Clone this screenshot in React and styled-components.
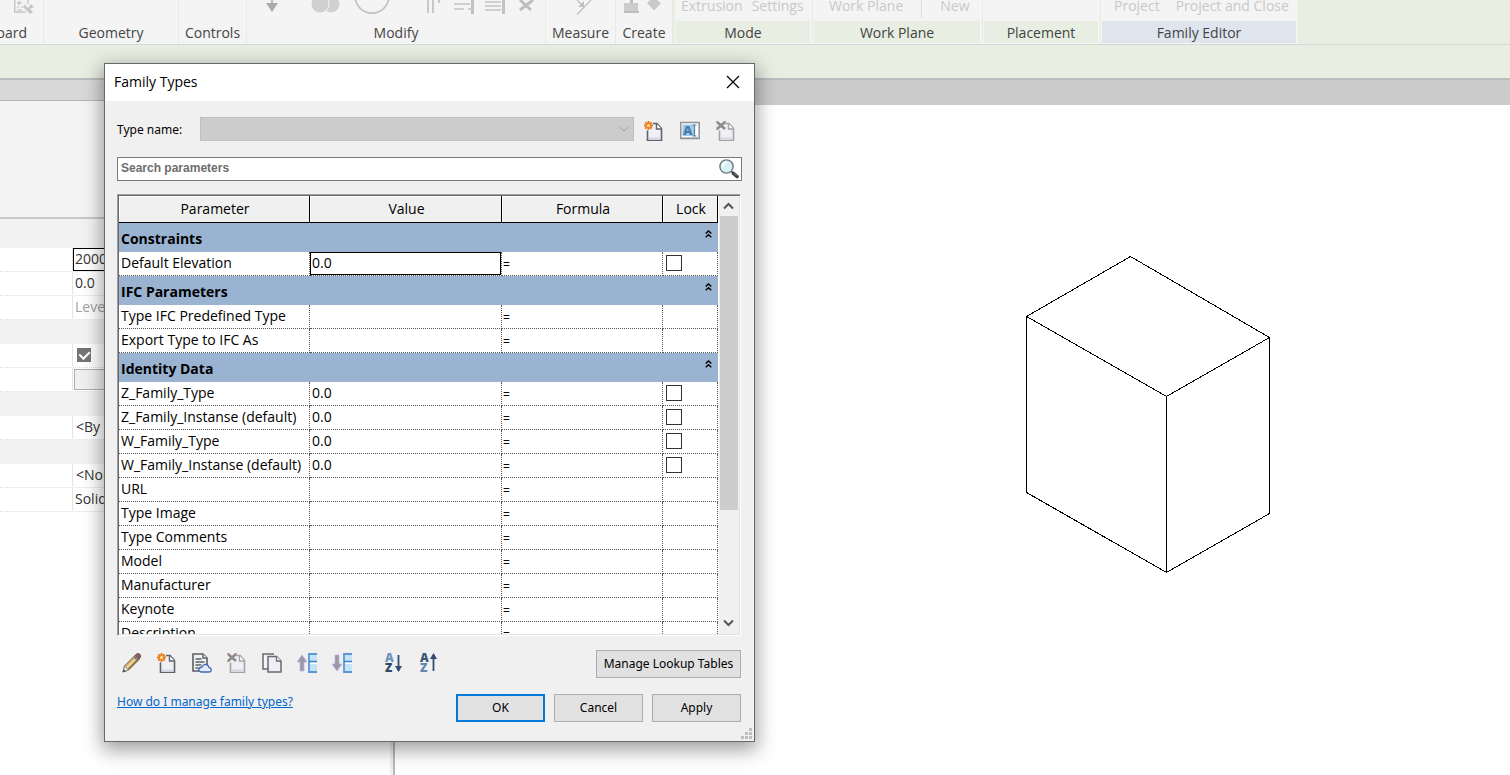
import React, { useState } from "react";
import styled, { createGlobalStyle } from "styled-components";

const groups = [
  {
    title: "Constraints",
    rows: [{ name: "Default Elevation", value: "0.0", lock: true, active: true }],
  },
  {
    title: "IFC Parameters",
    rows: [{ name: "Type IFC Predefined Type" }, { name: "Export Type to IFC As" }],
  },
  {
    title: "Identity Data",
    rows: [
      { name: "Z_Family_Type", value: "0.0", lock: true },
      { name: "Z_Family_Instanse (default)", value: "0.0", lock: true },
      { name: "W_Family_Type", value: "0.0", lock: true },
      { name: "W_Family_Instanse (default)", value: "0.0", lock: true },
      { name: "URL" },
      { name: "Type Image" },
      { name: "Type Comments" },
      { name: "Model" },
      { name: "Manufacturer" },
      { name: "Keynote" },
      { name: "Description" },
    ],
  },
];

/* ---------- icons ---------- */

const Page = ({ stroke = "#5d626b" }) => (
  <>
    <path d="M3.5 8v11h14V8l-4.500-6H9" fill="#eef0f6" />
    <path d="M9 2.500h4l4.500 5v12h-14V9.500" fill="none" stroke={stroke} strokeWidth="1.600" />
    <path d="M12.500 2.500V8h5" fill="#fff" stroke={stroke} strokeWidth="1.400" />
    <path d="M5 17.500h11.500" stroke="#d5d7e4" strokeWidth="2" />
  </>
);

const NewIcon = () => (
  <svg width="20" height="20" viewBox="0 0 20 20" aria-hidden="true">
    <Page />
    <path
      d="M4.500 0v9M0 4.500h9M1.300 1.300l6.400 6.400M7.700 1.300L1.300 7.700"
      stroke="#e8750f"
      strokeWidth="1.800"
    />
    <circle cx="4.500" cy="4.500" r="3" fill="#ee8220" />
    <circle cx="4.500" cy="4.500" r="1.500" fill="#ffe9a8" />
  </svg>
);

const DeleteIcon = () => (
  <svg width="20" height="20" viewBox="0 0 20 20" aria-hidden="true">
    <Page stroke="#a3a3a3" />
    <path d="M1 1l8 7M9 1L1 8" stroke="#8f8b8b" strokeWidth="2.600" />
    <path d="M0 .5h2M8 .5h2M0 8.500h2" stroke="#c08a8a" />
  </svg>
);

const RenameIcon = () => (
  <svg width="20" height="20" viewBox="0 0 20 20" aria-hidden="true">
    <rect x=".8" y="1.500" width="18.400" height="16" fill="#fff" stroke="#8d939b" strokeWidth="1.500" />
    <rect x="2.500" y="3.500" width="12" height="11.500" fill="#9fcbea" />
    <Letter x="3" y="14" $size={13} fill="#4a7ea8">A</Letter>
    <path d="M12.500 4h4M12.500 15h4M14.500 4v11" stroke="#5d7f9c" strokeWidth="1.200" />
    <path d="M2 16.500h17" stroke="#b9bec6" />
  </svg>
);

const SearchIcon = () => (
  <svg width="20" height="20" viewBox="0 0 20 20" aria-hidden="true">
    <circle cx="7.500" cy="7.500" r="6.600" fill="#d8eff4" stroke="#6f777c" strokeWidth="1.400" />
    <path d="M3.500 8a4.500 4.500 0 014-4.500" fill="none" stroke="#fff" strokeWidth="2" />
    <path d="M12 12l2.500 2.500" stroke="#777" strokeWidth="2" />
    <path d="M14.500 14.500l3.500 3" stroke="#3c3f42" strokeWidth="3.600" strokeLinecap="round" />
    <path d="M14.500 13.800l3.500 3.200" stroke="#777c80" />
  </svg>
);

const PencilIcon = () => (
  <svg width="20" height="20" viewBox="0 0 20 20" aria-hidden="true">
    <path d="M1 19l1.500-6L13.500 2l4 4L6.500 17z" fill="#d9b36a" stroke="#6d5d47" />
    <path d="M4.500 15L15 4.500" stroke="#f5dfa8" strokeWidth="1.600" />
    <path d="M6 16.500L16.500 6" stroke="#8b7046" strokeWidth="1.400" />
    <path d="M13 2.500l2-1.700q1.500-.8 2.800.5t.7 2.800L17 6z" fill="#8c5f5f" stroke="#70504f" />
    <path d="M12 3.500l4 4" stroke="#777b82" strokeWidth="2.200" />
    <path d="M1 19l1.500-6 4 4z" fill="#f2ede2" stroke="#8a8a8a" />
    <path d="M.8 19.200l1-3 2 2z" fill="#444" />
  </svg>
);

const SharedIcon = () => (
  <svg width="20" height="20" viewBox="0 0 20 20" aria-hidden="true">
    <path d="M1 1h10l4 4v13H1z" fill="#f0f0f2" stroke="#5b5f66" strokeWidth="1.600" />
    <path d="M11 1v4h4" fill="#fff" stroke="#5b5f66" strokeWidth="1.400" />
    <path d="M3.500 6h6M3.500 9h9M3.500 12h6M3.500 15h3" stroke="#5b5f66" strokeWidth="1.500" />
    <path
      d="M9 19q-2.500-.5-2.300-2.500T10 14q1.500-3 4-2.500t3 3q2.500.5 2.300 2.500T17.500 19z"
      fill="#e4ecfb"
      stroke="#4467b5"
      strokeWidth="1.300"
    />
  </svg>
);

const CopyIcon = () => (
  <svg width="20" height="20" viewBox="0 0 20 20" aria-hidden="true">
    <path d="M12 1H1v15h5" fill="#f4f4f6" stroke="#666a72" strokeWidth="1.500" />
    <path d="M6 3.500h8.500L19 8v11H6z" fill="#eeeff5" stroke="#666a72" strokeWidth="1.500" />
    <path d="M14.500 3.500V8H19" fill="#fff" stroke="#666a72" strokeWidth="1.300" />
  </svg>
);

const MoveIcon = ({ down }) => (
  <svg width="20" height="20" viewBox="0 0 20 20" aria-hidden="true">
    <path
      d={down ? "M3 2h4v9h3l-5 7-5-7h3z" : "M3 18h4V9h3L5 2 0 9h3z"}
      fill="#9a98a2"
      stroke="#c3aee6"
      strokeWidth=".8"
    />
    <path d="M12 1h8v7h-8zM12 11h8v7h-8z" fill="#c4e3f7" />
    <path d="M20 1h-8v18h8" fill="none" stroke="#5c96d6" strokeWidth="1.800" />
    <path d="M12 8.500h8" stroke="#3f83c8" strokeWidth="1.500" />
    <path d="M13 10.500h7" stroke="#fff" />
  </svg>
);

const SortIcon = ({ up }) => (
  <svg width="20" height="20" viewBox="0 0 20 20" aria-hidden="true">
    <Letter x="1" y="9" $size={12} fill={up ? "#3c5878" : "#6b94bd"}>A</Letter>
    <Letter x="1" y="19" $size={12} fill={up ? "#5f88b3" : "#2f4865"}>Z</Letter>
    <line x1="14.500" y1="2" x2="14.500" y2="18" stroke="#334b70" strokeWidth="1.800" />
    <polygon
      points={up ? "14.500,0 18,6 11,6" : "14.500,19 18,13 11,13"}
      fill="#334b70"
    />
  </svg>
);

const Chevrons = () => (
  <svg width="7" height="8" viewBox="0 0 7 8" aria-hidden="true">
    <path d="M.7 3.500L3.500.9l2.800 2.600M.7 7.300l2.800-2.600 2.800 2.600" fill="none" stroke="#000" strokeWidth="1.400" />
  </svg>
);

const Arrow = ({ down }) => (
  <svg width="11" height="8" viewBox="0 0 11 8" aria-hidden="true">
    <path d={down ? "M1 1.500l4.500 4.500L10 1.500" : "M1 6.500L5.500 2 10 6.500"} fill="none" stroke="#555" strokeWidth="2" />
  </svg>
);

/* ---------- page ---------- */

function Ribbon() {
  return (
    <RibbonBar>
      <Panel $w={44}>
        <Tools $pad={14}>
          <svg width="21" height="14" viewBox="0 0 21 14" aria-hidden="true">
            <path d="M.7 0v12h11M14 0v4" fill="none" stroke="#c4c4c4" strokeWidth="1.400" />
            <path d="M3 3h5M3 7h2M7 7h4M5 1v4M3 10h5" stroke="#bbb" strokeWidth="1.200" />
            <path d="M10 4l4 4 3-4 3 3-4 2 3 3-3 2-6-6z" fill="#c6c6c6" />
          </svg>
        </Tools>
        <Label $end>Clipboard</Label>
      </Panel>
      <Panel $w={135}>
        <Label>Geometry</Label>
      </Panel>
      <Panel $w={68}>
        <Label>Controls</Label>
      </Panel>
      <Panel $w={299}>
        <Tools $pad={18}>
          <svg width="272" height="14" viewBox="0 0 272 14" aria-hidden="true">
            <path d="M7 0v5" stroke="#bbb" strokeWidth="2" />
            <path d="M1 3h12L7 12z" fill="#aaa" />
            <circle cx="66" cy="4" r="8.500" fill="#d0d0d0" />
            <circle cx="55" cy="4" r="9" fill="#cfcfcf" stroke="#f4f4f4" />
            <circle cx="107" cy="-4" r="17" fill="none" stroke="#c4c4c4" strokeWidth="1.800" />
            <path d="M163 0v13M168 0v13" stroke="#c9c9c9" strokeWidth="2" />
            <path d="M174 0v3" stroke="#c9c9c9" strokeWidth="2" />
            <path d="M189 4h16M189 9h10M203 9h4" stroke="#cfcfcf" strokeWidth="2" />
            <path d="M207.500 0v14" stroke="#c2c2c2" strokeWidth="3" />
            <path d="M220 2h16M220 6h16M220 10h16" stroke="#cfcfcf" strokeWidth="2" />
            <path d="M238.500 0v14" stroke="#c2c2c2" strokeWidth="3" />
            <path d="M255 0l11 10M268 0l-13 10" stroke="#bdbdbd" strokeWidth="3" />
          </svg>
        </Tools>
        <Label>Modify</Label>
      </Panel>
      <Panel $w={70}>
        <Tools $pad={30}>
          <svg width="18" height="15" viewBox="0 0 18 15" aria-hidden="true">
            <path d="M1 14.500L15 0" stroke="#c4c4c4" strokeWidth="1.500" />
            <path d="M1 0l5 5" stroke="#c4c4c4" strokeWidth="1.500" />
            <path d="M8 1v6H2z" fill="#c0c0c0" />
          </svg>
        </Tools>
        <Label>Measure</Label>
      </Panel>
      <Panel $w={57}>
        <Tools $pad={7}>
          <svg width="40" height="14" viewBox="0 0 40 14" aria-hidden="true">
            <path d="M1 3h14v9H1z" fill="#ccc" />
            <path d="M7 0h3v3H7zM1 11h15v2H1z" fill="#bdbdbd" />
            <path d="M24 3l7-6 7 6.500-7 7z" fill="#c9c9c9" />
          </svg>
        </Tools>
        <Label>Create</Label>
      </Panel>
      <ContextPanel $w={138}>
        <Tools $pad={5} $gap={9}>
          <span>Extrusion</span>
          <span>Settings</span>
        </Tools>
        <Label $bg="#e8eee2">Mode</Label>
      </ContextPanel>
      <ContextPanel $w={170}>
        <Tools $pad={15} $gap={18}>
          <span>Work Plane</span>
          <Split />
          <span>New</span>
        </Tools>
        <Label $bg="#e8eee2">Work Plane</Label>
      </ContextPanel>
      <ContextPanel $w={118}>
        <Label $bg="#e8eee2">Placement</Label>
      </ContextPanel>
      <ContextPanel $w={198}>
        <Tools $pad={12} $gap={16}>
          <span>Project</span>
          <span>Project and Close</span>
        </Tools>
        <Label $bg="#dfe5ee">Family Editor</Label>
      </ContextPanel>
    </RibbonBar>
  );
}

function Properties() {
  return (
    <PropertiesPanel>
      <PaletteTitle />
      <Preview />
      <PropCategory $tall />
      <PropRow>
        <PropInput aria-label="Height" defaultValue="2000.0" />
      </PropRow>
      <PropRow>0.0</PropRow>
      <PropRow $muted>Level</PropRow>
      <PropCategory />
      <PropRow>
        <PropCheck type="checkbox" aria-label="Visible" defaultChecked />
      </PropRow>
      <PropRow>
        <EditButton aria-label="Edit visibility" />
      </PropRow>
      <PropCategory />
      <PropRow $indent>&lt;By Category&gt;</PropRow>
      <PropCategory />
      <PropRow $indent>&lt;None&gt;</PropRow>
      <PropRow>Solid</PropRow>
    </PropertiesPanel>
  );
}

function ParameterTable() {
  return (
    <TableFrame>
      <TableView>
        <Table>
          <colgroup>
            <col width="191" />
            <col width="192" />
            <col />
            <col width="55" />
          </colgroup>
          <thead>
            <tr>
              <th>Parameter</th>
              <th>Value</th>
              <th>Formula</th>
              <th>Lock</th>
            </tr>
          </thead>
          {groups.map((group) => (
            <tbody key={group.title}>
              <tr>
                <GroupCell colSpan={4} scope="rowgroup">
                  <GroupTitle>
                    {group.title}
                    <Chevrons />
                  </GroupTitle>
                </GroupCell>
              </tr>
              {group.rows.map((row) => (
                <tr key={row.name}>
                  <td>{row.name}</td>
                  <td>
                    <ValueInput
                      aria-label={row.name}
                      defaultValue={row.value}
                      $active={row.active}
                    />
                  </td>
                  <FormulaCell>=</FormulaCell>
                  <td>
                    {row.lock && <LockBox type="checkbox" aria-label={`Lock ${row.name}`} />}
                  </td>
                </tr>
              ))}
            </tbody>
          ))}
        </Table>
      </TableView>
      <Scrollbar>
        <ScrollButton aria-label="Scroll up">
          <Arrow />
        </ScrollButton>
        <Thumb />
        <ScrollButton aria-label="Scroll down">
          <Arrow down />
        </ScrollButton>
      </Scrollbar>
    </TableFrame>
  );
}

function FamilyTypes() {
  const [query, setQuery] = useState("");

  return (
    <Dialog role="dialog" aria-labelledby="dialog-title">
      <TitleBar>
        <h1 id="dialog-title">Family Types</h1>
        <IconButton aria-label="Close">
          <svg width="14" height="14" viewBox="0 0 14 14" aria-hidden="true">
            <path d="M1 1l12 12M13 1L1 13" stroke="#000" strokeWidth="1.200" />
          </svg>
        </IconButton>
      </TitleBar>
      <Body>
        <TypeRow>
          <label htmlFor="type-name">Type name:</label>
          <SelectWrap>
            <TypeSelect id="type-name" disabled />
            <svg width="10" height="6" viewBox="0 0 10 6" aria-hidden="true">
              <path d="M.5.5L5 5 9.500.5" fill="none" stroke="#a0a0a0" />
            </svg>
          </SelectWrap>
          <TypeTools>
            <IconButton aria-label="New type"><NewIcon /></IconButton>
            <IconButton aria-label="Rename type"><RenameIcon /></IconButton>
            <IconButton aria-label="Delete type"><DeleteIcon /></IconButton>
          </TypeTools>
        </TypeRow>
        <SearchBox>
          <input
            aria-label="Search parameters"
            placeholder="Search parameters"
            value={query}
            onChange={(e) => setQuery(e.target.value)}
          />
          <SearchIcon />
        </SearchBox>
        <ParameterTable />
        <ToolRow>
          <ToolGroup>
            <IconButton aria-label="Edit parameter"><PencilIcon /></IconButton>
            <IconButton aria-label="New parameter"><NewIcon /></IconButton>
            <IconButton aria-label="Shared parameter"><SharedIcon /></IconButton>
            <IconButton aria-label="Delete parameter"><DeleteIcon /></IconButton>
            <IconButton aria-label="Duplicate parameter"><CopyIcon /></IconButton>
            <IconButton aria-label="Move up"><MoveIcon /></IconButton>
            <IconButton aria-label="Move down"><MoveIcon down /></IconButton>
          </ToolGroup>
          <ToolGroup>
            <IconButton aria-label="Sort descending"><SortIcon /></IconButton>
            <IconButton aria-label="Sort ascending"><SortIcon up /></IconButton>
          </ToolGroup>
          <Button $wide>Manage Lookup Tables</Button>
        </ToolRow>
        <Footer>
          <a href="#help">How do I manage family types?</a>
          <Button $primary>OK</Button>
          <Button>Cancel</Button>
          <Button>Apply</Button>
        </Footer>
      </Body>
      <Grip width="11" height="11" viewBox="0 0 11 11" aria-hidden="true">
        <path
          d="M8 0h3v3H8zM4 4h3v3H4zM8 4h3v3H8zM0 8h3v3H0zM4 8h3v3H4zM8 8h3v3H8z"
          fill="#bfbfbf"
        />
      </Grip>
    </Dialog>
  );
}

function App() {
  return (
    <>
      <GlobalStyle />
      <Window>
        <Ribbon />
        <OptionsBar />
        <Workspace>
          <Properties />
          <View>
            <TabStrip />
            <Canvas>
              <Model width="246" height="319" viewBox="1025 255 246 319" aria-label="Extruded box">
                <path
                  d="M1130.500 256.500L1026.500 316.500V492.500L1166.500 572.500L1269.500 513.500V337.500zM1026.500 316.500L1166.500 396.500L1269.500 337.500M1166.500 396.500V572.500"
                  fill="none"
                  stroke="#000"
                  shapeRendering="crispEdges"
                />
              </Model>
            </Canvas>
          </View>
        </Workspace>
        <FamilyTypes />
      </Window>
    </>
  );
}

const GlobalStyle = createGlobalStyle`
  * {
    box-sizing: border-box;
  }

  body {
    margin: 0;
    background: #fff;
    font-family: "Open Sans", "Noto Sans", sans-serif;
    font-size: 14px;
    line-height: 20px;
    color: #000;
  }

  button,
  input,
  select {
    margin: 0;
    padding: 0;
    font: inherit;
    color: inherit;
    border-radius: 0;
  }

  svg {
    display: block;
    flex: none;
  }
`;

const Letter = styled.text`
  font-family: "Noto Sans", sans-serif;
  font-size: ${(p) => p.$size}px;
  font-weight: 900;
`;

const Window = styled.div`
  position: relative;
  display: flex;
  flex-direction: column;
  min-height: 100vh;
  overflow: hidden;
`;

const RibbonBar = styled.header`
  display: flex;
  height: 45px;
  background: #e8eee2;
  border-bottom: 1px solid #d5d7d3;
  color: #444;
`;

const Panel = styled.div`
  display: flex;
  flex-direction: column;
  justify-content: flex-end;
  flex: none;
  width: ${(p) => p.$w}px;
  padding-bottom: 1px;
  background: #f4f4f4;
  border-right: 1px solid #e8ebe0;
  overflow: hidden;
`;

const ContextPanel = styled(Panel)`
  padding: 0 2px 1px 1px;

  &:nth-child(7) {
    margin-left: 2px;
  }
`;

const Tools = styled.div`
  display: flex;
  gap: ${(p) => p.$gap || 0}px;
  height: 21px;
  padding-left: ${(p) => p.$pad}px;
  color: #c9c9c9;
  white-space: nowrap;

  span {
    margin-top: -4px;
  }
`;

const Split = styled.i`
  width: 1px;
  height: 18px;
  background: #ddd;
`;

const Label = styled.div`
  display: flex;
  flex: none;
  align-items: flex-end;
  justify-content: ${(p) => (p.$end ? "flex-end" : "center")};
  height: 22px;
  padding-right: ${(p) => (p.$end ? 16 : 0)}px;
  background: ${(p) => p.$bg || "transparent"};
`;

const OptionsBar = styled.div`
  height: 33px;
  background: #e8eee2;
`;

const Workspace = styled.main`
  display: flex;
  flex: 1;
  border-top: 2px solid #bcbcbe;
`;

const PropertiesPanel = styled.aside`
  flex: none;
  width: 395px;
  border-right: 2px solid #b8b8b8;
  box-shadow: inset -3px 0 #eee;
  color: #333;
`;

const PaletteTitle = styled.div`
  height: 21px;
  background: #d8d8d8;
  border-bottom: 1px solid #b5b5b5;
`;

const Preview = styled.div`
  height: 118px;
  background: #f4f4f4;
  border-bottom: 2px solid #c8c8c8;
`;

const PropCategory = styled.div`
  height: ${(p) => (p.$tall ? 29 : 24)}px;
  background: #f2f2f2;
`;

const PropRow = styled.div`
  display: flex;
  align-items: center;
  height: 24px;
  margin-right: 3px;
  padding: 0 0 2px ${(p) => (p.$indent ? 76 : 75)}px;
  background: linear-gradient(#e4e4e4, #e4e4e4) 72px 0 / 1px 100% no-repeat;
  border-bottom: 1px dotted #ddd;
  color: ${(p) => (p.$muted ? "#a0a0a0" : "#333")};
`;

const PropInput = styled.input`
  width: 100%;
  height: 23px;
  margin: 2px 0 0 -2px;
  padding: 0 0 2px 1px;
  border: 1px solid #000;
  background: #fff;
`;

const PropCheck = styled.input`
  appearance: none;
  width: 14px;
  height: 14px;
  margin-left: 2px;
  background: #757575;

  &:checked::after {
    content: "";
    display: block;
    width: 5px;
    height: 8px;
    margin: 1px 0 0 4px;
    border: solid #fff;
    border-width: 0 2px 2px 0;
    transform: rotate(45deg);
  }
`;

const EditButton = styled.button`
  width: 100%;
  height: 21px;
  margin: 2px 0 0 -1px;
  background: #f0f0f0;
  border: 1px solid #adadad;
`;

const View = styled.section`
  display: flex;
  flex: 1;
  flex-direction: column;
`;

const TabStrip = styled.div`
  height: 25px;
  background: #cbcbcb;
`;

const Canvas = styled.div`
  position: relative;
  flex: 1;
`;

const Model = styled.svg`
  position: absolute;
  left: 630px;
  top: 150px;
`;

const Dialog = styled.div`
  position: absolute;
  left: 104px;
  top: 63px;
  width: 651px;
  background: #f0f0f0;
  border: 1px solid #696969;
  box-shadow: 0 6px 18px 2px rgba(0, 0, 0, 0.38);
`;

const TitleBar = styled.div`
  display: flex;
  align-items: center;
  justify-content: space-between;
  height: 37px;
  padding: 0 14px 1px 9px;
  background: #fff;

  h1 {
    margin: 0;
    font-size: 14px;
    font-weight: 400;
  }
`;

const IconButton = styled.button`
  display: flex;
  padding: 0;
  background: none;
  border: 0;
`;

const Body = styled.div`
  padding: 16px 13px 19px 12px;
  font-family: "Noto Sans", sans-serif;
  font-size: 12px;
`;

const TypeRow = styled.div`
  display: flex;
  align-items: center;

  label {
    width: 83px;
    padding-top: 2px;
  }
`;

const SelectWrap = styled.div`
  display: flex;
  flex: 1;
  align-items: center;

  svg {
    margin-left: -15px;
    margin-right: 5px;
  }
`;

const TypeSelect = styled.select`
  appearance: none;
  flex: 1;
  height: 24px;
  background: #ccc;
  border: 1px solid #bfbfbf;
  opacity: 1;
`;

const TypeTools = styled.div`
  display: flex;
  gap: 16px;
  padding: 4px 5px 0 10px;
`;

const SearchBox = styled.div`
  display: flex;
  align-items: center;
  height: 24px;
  margin: 16px -1px 13px 0;
  padding: 0 2px 0 3px;
  background: #fff;
  border: 1px solid #7a7a7a;

  input {
    flex: 1;
    height: 20px;
    border: 0;
    outline: 0;
    font: bold 12px/16px "Liberation Sans", sans-serif;
    padding-bottom: 3px;
  }

  input::placeholder {
    color: #6d6d6d;
    opacity: 1;
  }
`;

const TableFrame = styled.div`
  display: flex;
  height: 442px;
  border: 1px solid #a0a0a0;
  border-right-color: #fff;
  border-bottom-color: #fff;
  box-shadow: inset 1px 1px #696969, inset -1px -1px #e3e3e3;
  padding: 1px;
  font-family: "Open Sans", "Noto Sans", sans-serif;
  font-size: 14px;
`;

const TableView = styled.div`
  flex: 1;
  overflow: hidden;
  background: #fff;
`;

const Table = styled.table`
  width: 100%;
  table-layout: fixed;
  border-collapse: separate;
  border-spacing: 0;

  thead th {
    height: 27px;
    padding: 0 0 0 2px;
    font-weight: 400;
    background: #f0f0f0;
    border-right: 1px solid #000;
    border-bottom: 1px solid #000;
    box-shadow: inset 1px 1px #fff;
  }

  td {
    height: 24px;
    padding: 0 0 0 2px;
    border-right: 1px dotted #555;
    border-bottom: 1px dotted #555;
    line-height: 21px;
    vertical-align: top;
    white-space: nowrap;
  }

  td:nth-child(2) {
    padding: 0;
  }
`;

const GroupCell = styled.th`
  height: 29px;
  padding: 0 5px 0 2px;
  background: #99b3d1;
  text-align: left;
  font-weight: 700;
`;

const GroupTitle = styled.div`
  display: flex;
  justify-content: space-between;
  padding-top: 3px;

  svg {
    margin: 1px 1px 0 0;
  }
`;

const ValueInput = styled.input`
  display: block;
  width: 100%;
  height: 23px;
  padding: 0 1px 2px;
  background: #fff;
  border: 1px solid ${(p) => (p.$active ? "#000" : "transparent")};
`;

const FormulaCell = styled.td`
  font-size: 12px;

  && {
    padding: 2px 0 0 1px;
  }
`;

const LockBox = styled.input`
  appearance: none;
  display: block;
  width: 16px;
  height: 16px;
  margin: 3px 0 0 1px;
  background: #fff;
  border: 1px solid #333;

  &:checked {
    background: #333;
  }
`;

const Scrollbar = styled.div`
  display: flex;
  flex-direction: column;
  width: 21px;
  padding: 0 1px 1px 0;
  background: #f0f0f0;
  border-left: 1px solid #fff;
`;

const ScrollButton = styled.button`
  display: flex;
  align-items: center;
  justify-content: center;
  height: 20px;
  padding: 0;
  background: #f0f0f0;
  border: 0;

  &:last-child {
    margin-top: auto;
  }
`;

const Thumb = styled.div`
  height: 294px;
  margin-left: 1px;
  background: #cdcdcd;
`;

const ToolRow = styled.div`
  display: flex;
  align-items: center;
  gap: 32px;
  margin-top: 14px;
  padding-left: 5px;
`;

const ToolGroup = styled.div`
  display: flex;
  gap: 15px;
  padding-bottom: 2px;
`;

const Button = styled.button`
  width: ${(p) => (p.$wide ? "145px" : "89px")};
  height: 28px;
  margin-left: ${(p) => (p.$wide ? "auto" : "0")};
  background: #e1e1e1;
  border: ${(p) => (p.$primary ? "2px solid #0078d7" : "1px solid #adadad")};
  white-space: nowrap;
`;

const Footer = styled.div`
  display: flex;
  gap: 9px;
  margin-top: 16px;

  a {
    margin-right: auto;
    line-height: 16px;
    color: #0066cc;
  }
`;

const Grip = styled.svg`
  position: absolute;
  right: 2px;
  bottom: 2px;
`;

export default App;
